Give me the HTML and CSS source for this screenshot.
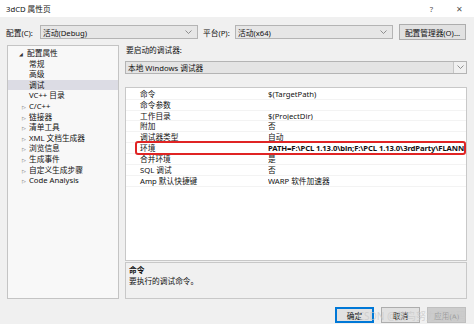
FILE: index.html
```html
<!DOCTYPE html>
<html lang="zh-CN">
<head>
    <meta charset="UTF-8">
    <title>3dCD 属性页</title>
    <link rel="stylesheet" href="styles.css">
</head>
<body>
    <div class="dialog">
        <div class="titlebar">
            <span class="title">3dCD 属性页</span>
            <span class="help">?</span>
            <span class="close">✕</span>
        </div>

        <div class="toolbar">
            <label class="lbl">配置(C):</label>
            <div class="combo combo-config">
                <span>活动(Debug)</span>
                <svg class="chev" width="7" height="4" viewBox="0 0 7 4"><polyline points="0.5,0.5 3.5,3.5 6.5,0.5" fill="none" stroke="#777" stroke-width="0.8"/></svg>
            </div>
            <label class="lbl lbl-platform">平台(P):</label>
            <div class="combo combo-platform">
                <span>活动(x64)</span>
                <svg class="chev" width="7" height="4" viewBox="0 0 7 4"><polyline points="0.5,0.5 3.5,3.5 6.5,0.5" fill="none" stroke="#777" stroke-width="0.8"/></svg>
            </div>
            <button class="btn btn-manager">配置管理器(O)...</button>
        </div>

        <div class="main">
            <ul class="tree">
                <li class="node root"><span class="arrow open">◢</span>配置属性</li>
                <li class="node leaf">常规</li>
                <li class="node leaf">高级</li>
                <li class="node leaf selected">调试</li>
                <li class="node leaf">VC++ 目录</li>
                <li class="node"><span class="arrow">▷</span>C/C++</li>
                <li class="node"><span class="arrow">▷</span>链接器</li>
                <li class="node"><span class="arrow">▷</span>清单工具</li>
                <li class="node"><span class="arrow">▷</span>XML 文档生成器</li>
                <li class="node"><span class="arrow">▷</span>浏览信息</li>
                <li class="node"><span class="arrow">▷</span>生成事件</li>
                <li class="node"><span class="arrow">▷</span>自定义生成步骤</li>
                <li class="node"><span class="arrow">▷</span>Code Analysis</li>
            </ul>

            <div class="content">
                <div class="caption">要启动的调试器:</div>
                <div class="combo combo-debugger">
                    <span>本地 Windows 调试器</span>
                    <span class="drop-btn">
                        <svg width="7" height="4" viewBox="0 0 7 4"><polyline points="0.5,0.5 3.5,3.5 6.5,0.5" fill="none" stroke="#777" stroke-width="0.8"/></svg>
                    </span>
                </div>

                <div class="grid">
                    <div class="row"><span class="name">命令</span><span class="value">$(TargetPath)</span></div>
                    <div class="row"><span class="name">命令参数</span><span class="value"></span></div>
                    <div class="row"><span class="name">工作目录</span><span class="value">$(ProjectDir)</span></div>
                    <div class="row"><span class="name">附加</span><span class="value">否</span></div>
                    <div class="row"><span class="name">调试器类型</span><span class="value">自动</span></div>
                    <div class="row marked"><span class="name">环境</span><span class="value bold">PATH=F:\PCL 1.13.0\bin;F:\PCL 1.13.0\3rdParty\FLANN</span></div>
                    <div class="row"><span class="name">合并环境</span><span class="value">是</span></div>
                    <div class="row"><span class="name">SQL 调试</span><span class="value">否</span></div>
                    <div class="row"><span class="name">Amp 默认快捷键</span><span class="value">WARP 软件加速器</span></div>
                </div>

                <div class="desc">
                    <div class="desc-title">命令</div>
                    <div class="desc-text">要执行的调试命令。</div>
                </div>
            </div>
        </div>

        <div class="footer">
            <button class="btn btn-default">确定</button>
            <button class="btn">取消</button>
            <button class="btn btn-disabled">应用(A)</button>
            <span class="watermark">CSDN @菜鸟努力写代码</span>
        </div>
    </div>
</body>
</html>
```

FILE: styles.css
```css
* {
    padding: 0;
    margin: 0;
    box-sizing: border-box;
}
body {
    width: 474px;
    height: 324px;
    background-color: #f0f0f0;
    color: #111;
    font-family: "Noto Sans", "Noto Sans CJK SC", sans-serif;
    font-size: 7.7px;
    overflow: hidden;
}
.dialog {
    display: flex;
    flex-direction: column;
    height: 324px;
}
.titlebar {
    height: 17px;
    background-color: #fff;
    display: flex;
    align-items: center;
    padding: 0 11px 0 6px;
}
.title {
    flex: 1;
}
.help {
    margin-right: 23px;
    color: #555;
}
.close {
    color: #555;
    font-size: 8px;
}

/* top row */
.toolbar {
    display: flex;
    align-items: center;
    height: 16px;
    margin-top: 7px;
    padding: 0 8px 0 6px;
}
.lbl {
    width: 34px;
    flex-shrink: 0;
}
.lbl-platform {
    margin-left: 5px;
    width: 32px;
}
.combo {
    display: flex;
    align-items: center;
    justify-content: space-between;
    height: 14px;
    padding: 0 5px 0 2px;
    background-color: #e6e6e6;
    border: 1px solid #b4b4b4;
}
.combo-config {
    width: 158px;
}
.combo-platform {
    width: 158px;
}
.chev {
    display: block;
}
.btn {
    font-family: inherit;
    font-size: 7.7px;
    color: #111;
    background-color: #e1e1e1;
    border: 1px solid #adadad;
    height: 16px;
}
.btn-manager {
    margin-left: auto;
    width: 67px;
}

/* main area */
.main {
    display: flex;
    margin-top: 5px;
    padding: 0 7px;
    height: 254px;
}
.tree {
    list-style: none;
    flex: 0 0 112px;
    background-color: #f8f8f8;
    border: 1px solid #c4c4c4;
    padding-top: 2px;
}
.node {
    height: 10.6px;
    line-height: 10.6px;
    padding-left: 21px;
    white-space: nowrap;
}
.node .arrow {
    display: inline-block;
    width: 7px;
    margin-left: -7px;
    font-family: "DejaVu Sans", sans-serif;
    font-size: 5px;
    color: #555;
}
.root {
    padding-left: 13px;
}
.root .arrow {
    margin-left: -2px;
    width: 8px;
    color: #333;
}
.selected {
    background-color: #dcdce4;
}

.content {
    flex: 1;
    min-width: 0;
    margin-left: 6px;
    display: flex;
    flex-direction: column;
}
.caption {
    height: 12px;
    line-height: 10px;
    padding-left: 1px;
}
.combo-debugger {
    height: 13px;
    margin-top: 4px;
    padding: 0 0 0 2px;
    background-color: #e4e4e4;
}
.drop-btn {
    width: 13px;
    height: 100%;
    border-left: 1px solid #c6c6c6;
    background-color: #f0f0f0;
    display: flex;
    align-items: center;
    justify-content: center;
}
.grid {
    margin-top: 13px;
    height: 175px;
    background-color: #fff;
    border: 1px solid #c8c8c8;
    padding-top: 1px;
}
.row {
    position: relative;
    display: flex;
    height: 10.85px;
    line-height: 10.85px;
    border-bottom: 1px solid #f3f3f3;
    white-space: nowrap;
}
.name {
    flex: 0 0 142px;
    padding-left: 14px;
}
.value {
    flex: 1;
    min-width: 0;
    overflow: hidden;
}
.bold {
    font-weight: bold;
    letter-spacing: -0.12px;
}
.marked::after {
    content: "";
    position: absolute;
    left: 9px;
    right: 0;
    top: -2px;
    bottom: -2px;
    border: 2px solid #e02424;
    border-radius: 3px;
}
.desc {
    height: 37px;
    margin-top: 1px;
    border: 1px solid #c8c8c8;
    background-color: #f0f0f0;
    padding: 2px 3px;
    line-height: 11px;
}
.desc-title {
    font-weight: bold;
}

/* buttons */
.footer {
    position: relative;
    display: flex;
    justify-content: flex-end;
    gap: 7px;
    padding: 8px 8px 0 0;
}
.footer .btn {
    width: 39px;
}
.btn-default {
    border: 1px solid #0078d7;
    box-shadow: inset 0 0 0 1px #0078d7;
}
.btn-disabled {
    background-color: #cccccc;
    border-color: #bfbfbf;
    color: #9a9a9a;
}
.watermark {
    position: absolute;
    right: 8px;
    top: 9px;
    font-size: 10px;
    color: rgba(200, 200, 200, 0.75);
    white-space: nowrap;
    pointer-events: none;
}
```
